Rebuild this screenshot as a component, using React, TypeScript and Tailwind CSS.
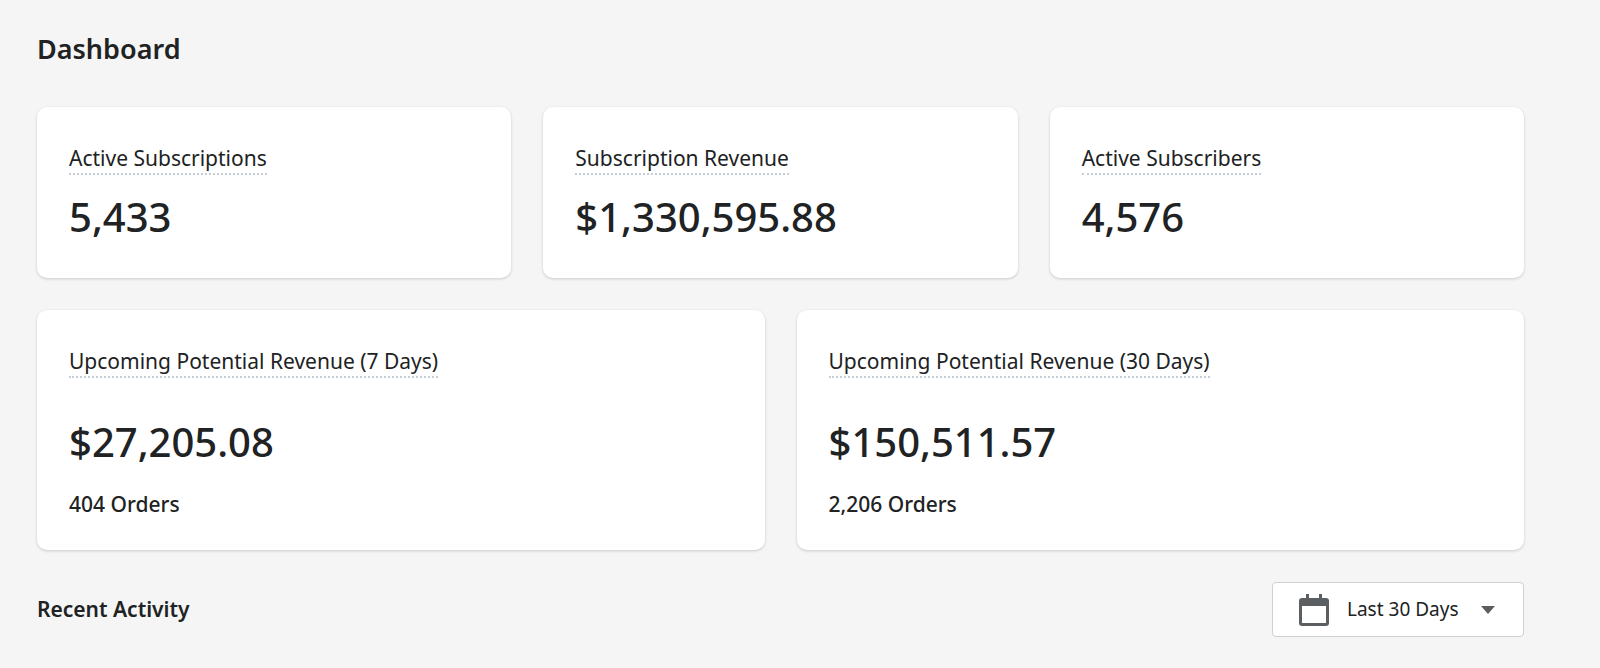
export default function App() {
  const Label = ({ t }: { t: string }) => (
    <span className="self-start text-[21px] leading-[27px] text-[#202223] border-b-2 border-dotted border-[#c4cdd5] pb-[1px]">{t}</span>
  );
  const card = "bg-white rounded-[10px] shadow-[0_1px_3px_rgba(0,0,0,0.18)] flex flex-col pl-8 pr-8";
  return (
    <div className="min-h-[668px] bg-[#f5f5f5] pl-[37px] pr-[76px] pt-[31px] text-[#202223]" style={{ fontFamily: '"Noto Sans", "Open Sans", sans-serif' }}>
      <h1 className="text-[27px] font-semibold leading-[36px]">Dashboard</h1>
      <div className="grid grid-cols-3 gap-8 mt-[40px]">
        {[["Active Subscriptions", "5,433"], ["Subscription Revenue", "$1,330,595.88"], ["Active Subscribers", "4,576"]].map(([l, v]) => (
          <div key={l} className={card + " h-[171px] pt-[38px]"}>
            <Label t={l} />
            <div className="text-[40px] font-medium leading-[52px] mt-[16px]">{v}</div>
          </div>
        ))}
      </div>
      <div className="grid grid-cols-2 gap-8 mt-[32px]">
        {[["Upcoming Potential Revenue (7 Days)", "$27,205.08", "404 Orders"], ["Upcoming Potential Revenue (30 Days)", "$150,511.57", "2,206 Orders"]].map(([l, v, o]) => (
          <div key={l} className={card + " h-[240px] pt-[38px]"}>
            <Label t={l} />
            <div className="text-[40px] font-medium leading-[52px] mt-[38px]">{v}</div>
            <div className="text-[21px] font-medium leading-[28px] mt-[22px]">{o}</div>
          </div>
        ))}
      </div>
      <div className="flex items-center justify-between mt-[32px]">
        <h2 className="text-[21px] font-semibold">Recent Activity</h2>
        <button className="w-[252px] h-[55px] bg-white border border-[#d0d0d0] rounded-[4px] flex items-center pl-[26px] gap-[18px] text-[19px] text-[#202223]">
          <svg width="30" height="32" viewBox="0 0 30 32" fill="#5c5f62">
            <rect x="7" y="0" width="3" height="6" />
            <rect x="20" y="0" width="3" height="6" />
            <path d="M3 4h24a3 3 0 0 1 3 3v22a3 3 0 0 1-3 3H3a3 3 0 0 1-3-3V7a3 3 0 0 1 3-3zm0 8v17h24V12z" />
          </svg>
          <span>Last 30 Days</span>
          <svg width="14" height="8" viewBox="0 0 14 8" className="ml-[4px]"><path d="M0 0h14L7 8z" fill="#5c5f62" /></svg>
        </button>
      </div>
    </div>
  );
}
